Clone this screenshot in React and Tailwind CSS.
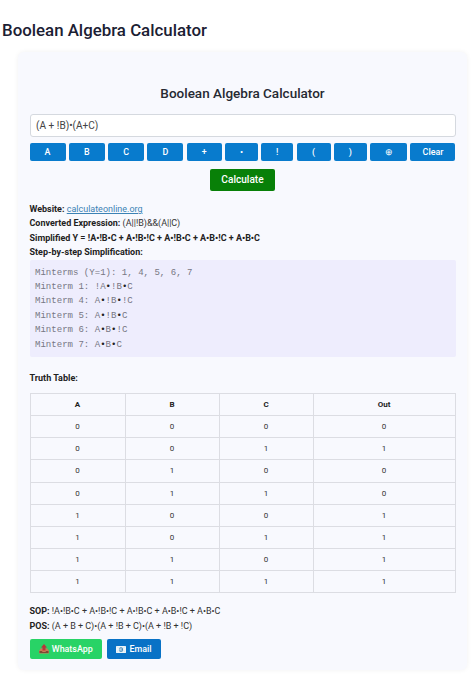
const keys = [
  { label: 'A', width: 'w-[36px]' },
  { label: 'B', width: 'w-[36px]' },
  { label: 'C', width: 'w-[36px]' },
  { label: 'D', width: 'w-[36px]' },
  { label: '+', width: 'w-[35px]' },
  { label: '•', width: 'w-[33px]' },
  { label: '!', width: 'w-[32px]' },
  { label: '(', width: 'w-[34px]' },
  { label: ')', width: 'w-[33px]' },
  { label: '⊕', width: 'w-[37px]' },
  { label: 'Clear', width: 'w-[45px]' },
]

const steps = [
  'Minterms (Y=1): 1, 4, 5, 6, 7',
  'Minterm 1: !A•!B•C',
  'Minterm 4: A•!B•!C',
  'Minterm 5: A•!B•C',
  'Minterm 6: A•B•!C',
  'Minterm 7: A•B•C',
]

const rows = [
  [0, 0, 0, 0],
  [0, 0, 1, 1],
  [0, 1, 0, 0],
  [0, 1, 1, 0],
  [1, 0, 0, 1],
  [1, 0, 1, 1],
  [1, 1, 0, 1],
  [1, 1, 1, 1],
]

function OutboxIcon() {
  return (
    <svg viewBox="0 0 20 20" className="w-[10px] h-[10px] shrink-0">
      <path d="M3 9h14l3 5v5H0v-5z" fill="#c87a55" />
      <path d="M1 14h5l1 2h6l1-2h5v4H1z" fill="#7d4a35" />
      <path d="M10 0l6 7h-3v6H7V7H4z" fill="#b8363a" />
    </svg>
  )
}

function EmailIcon() {
  return (
    <svg viewBox="0 0 20 14" className="w-[10px] h-[7px] shrink-0">
      <rect width="20" height="14" rx="1" fill="#eef5f8" />
      <path d="M1 1l9 6 9-6M1 13l6-7M19 13l-6-7" fill="none" stroke="#c5d8e4" strokeWidth="1" />
      <ellipse cx="10" cy="7" rx="4" ry="5" fill="#3b83b5" />
      <path d="M12 9.5H9.2a2 2.5 0 0 1 0-5H12M8 7h3.5" fill="none" stroke="white" strokeWidth="1.2" />
    </svg>
  )
}

function StepLine({ text }) {
  return (
    <div>
      {text.split('•').map((part, i) => (
        <span key={i}>
          {i > 0 && <span className="text-[#222]">•</span>}
          {part}
        </span>
      ))}
    </div>
  )
}

function TruthTable() {
  return (
    <table className="w-[426px] table-fixed border-collapse text-center text-[8px] leading-[10px] text-[#333]">
      <colgroup>
        <col className="w-[95px]" />
        <col className="w-[94px]" />
        <col className="w-[94px]" />
        <col />
      </colgroup>
      <thead>
        <tr className="h-[22.1px]">
          {['A', 'B', 'C', 'Out'].map(name => (
            <th key={name} className="border border-[#dcdde3] p-0 pt-px font-bold text-[#222]">{name}</th>
          ))}
        </tr>
      </thead>
      <tbody>
        {rows.map(row => (
          <tr key={row.join('')} className="h-[22.1px]">
            {row.map((bit, i) => (
              <td key={i} className="border border-[#dcdde3] p-0 pt-px">{bit}</td>
            ))}
          </tr>
        ))}
      </tbody>
    </table>
  )
}

export default function App() {
  return (
    <div className="h-[688px] overflow-hidden bg-white pt-[19px] font-['Roboto','Liberation_Sans',sans-serif]">
      <h1 className="pl-[2px] text-[16.85px] leading-[22px] font-medium text-[#1b2033]">Boolean Algebra Calculator</h1>
      <main className="mt-[11px] ml-[18px] h-[618px] w-[449px] rounded-[6px] bg-[#f8f9fe] px-[11.5px] pt-[33px] shadow-[0_0_5px_rgba(0,0,0,0.06)]">
        <h2 className="text-center text-[13.5px] leading-[16px] font-medium text-[#262932]">Boolean Algebra Calculator</h2>
        <input
          className="mt-[13px] block h-[23px] w-full rounded-[3px] border border-[#d5d9df] bg-white px-[5.5px] text-[10.1px] text-[#444] outline-none"
          defaultValue="(A + !B)•(A+C)"
          aria-label="Expression"
        />
        <div className="mt-[6px] flex justify-between">
          {keys.map(key => (
            <button key={key.label} className={`${key.width} h-[18px] rounded-[2px] bg-[#087bcd] text-[8.9px] leading-[18px] font-medium text-white`}>
              {key.label}
            </button>
          ))}
        </div>
        <button className="mx-auto mt-[8px] block h-[22px] w-[65px] rounded-[2px] bg-[#088008] text-[10.1px] leading-[22px] font-medium text-white">
          Calculate
        </button>

        <div className="mt-[11px] text-[8.97px] leading-[14.4px] whitespace-nowrap text-[#333]">
          <p><b className="text-[#222]">Website:</b> <a className="text-[#3b82b5] underline">calculateonline.org</a></p>
          <p><b className="text-[#222]">Converted Expression:</b> (A||!B)&amp;&amp;(A||C)</p>
          <p className="font-bold text-[#222]">Simplified Y = !A•!B•C + A•!B•!C + A•!B•C + A•B•!C + A•B•C</p>
          <p className="font-bold text-[#222]">Step-by-step Simplification:</p>
        </div>
        <div className="h-[97px] rounded-[2px] bg-[#eeedfd] px-[5.5px] pt-[6px] font-['Liberation_Mono',monospace] text-[9.05px] leading-[14.4px] whitespace-pre text-[#777783]">
          {steps.map(step => <StepLine key={step} text={step} />)}
        </div>

        <p className="mt-[14px] mb-[8px] text-[9px] leading-[14.5px] font-bold text-[#222]">Truth Table:</p>
        <TruthTable />

        <div className="mt-[11.5px] text-[8.97px] leading-[14.5px] whitespace-nowrap text-[#333]">
          <p><b className="text-[#222]">SOP:</b> !A•!B•C + A•!B•!C + A•!B•C + A•B•!C + A•B•C</p>
          <p><b className="text-[#222]">POS:</b> (A + B + C)•(A + !B + C)•(A + !B + !C)</p>
        </div>
        <div className="mt-[5.5px] flex gap-[5px] text-[8.9px] font-medium text-white">
          <button className="flex h-[20px] w-[72.5px] items-center justify-center gap-[3px] rounded-[2px] bg-[#28d366] pt-px">
            <OutboxIcon />
            WhatsApp
          </button>
          <button className="flex h-[20px] w-[54px] items-center justify-center gap-[3px] rounded-[2px] bg-[#0872c6] pt-px">
            <EmailIcon />
            Email
          </button>
        </div>
      </main>
    </div>
  )
}
